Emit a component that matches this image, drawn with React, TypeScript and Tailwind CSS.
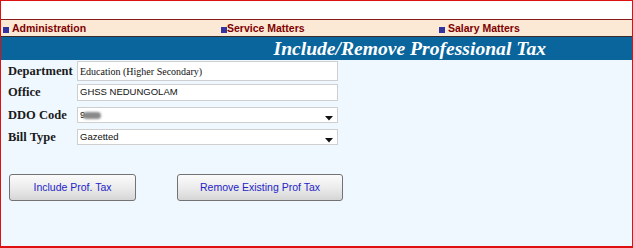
import React from 'react';

const navItems = [
    { label: 'Administration', gap: 'ml-[3px]' },
    { label: 'Service Matters', gap: 'ml-0' },
    { label: 'Salary Matters', gap: 'ml-[3px]' },
];

function NavBar() {
    return (
        <div className="flex h-[17px] items-center overflow-hidden border-b border-[#3b2b2b] bg-[#fbe9d6] pl-[2px]">
            {navItems.map((item) => (
                <div key={item.label} className="flex w-[218px] shrink-0 items-center">
                    <span className="mt-[3px] inline-block h-[6px] w-[6px] bg-[#3333a0]" />
                    <span
                        className={`${item.gap} text-[10.5px] font-bold leading-none text-[#800000]`}
                        style={{ fontFamily: '"Liberation Sans", Arial, sans-serif' }}
                    >
                        {item.label}
                    </span>
                </div>
            ))}
        </div>
    );
}

function Field({ label, h, mt, children }: { label: string; h: string; mt: string; children: React.ReactNode }) {
    return (
        <div className={`flex items-center ${mt}`}>
            <div
                className="w-[69px] text-[12.5px] font-bold leading-none text-[#1a1a1a]"
                style={{ fontFamily: '"Liberation Serif", "Times New Roman", serif' }}
            >
                {label}
            </div>
            <div
                className={`relative flex w-[261px] items-center border border-[#cfcfcf] bg-white pl-[2px] ${h}`}
            >
                {children}
            </div>
        </div>
    );
}

function Arrow() {
    return (
        <svg className="absolute right-[4px] top-[8px]" width="8" height="5" viewBox="0 0 8 5">
            <path d="M0 0 H8 L4 4.5 Z" fill="#111" />
        </svg>
    );
}

function ActionButton({ label, width }: { label: string; width: string }) {
    return (
        <button
            className={`h-[27px] ${width} rounded-[3px] border border-[#737373] bg-gradient-to-b from-[#fbfbfb] via-[#ececec] to-[#d6d6d6] text-[10.5px] text-[#2424c8]`}
            style={{ fontFamily: '"Liberation Sans", Tahoma, sans-serif' }}
        >
            {label}
        </button>
    );
}

export default function App() {
    const sans = { fontFamily: '"Liberation Sans", Arial, sans-serif' };
    return (
        <div className="flex h-[248px] w-[633px] flex-col border border-b-2 border-[#e01010] bg-[#f0f8ff]">
            <div className="h-[19px] border-b border-[#8b1a1a] bg-white" />
            <NavBar />
            <div className="flex h-[23px] items-center justify-end bg-[#09659c] pr-[86px]">
                <span
                    className="text-[19.6px] font-bold italic leading-none text-white"
                    style={{ fontFamily: '"Liberation Serif", Georgia, serif' }}
                >
                    Include/Remove Professional Tax
                </span>
            </div>
            <div className="flex flex-col pl-[7px] pt-[1px]">
                <Field label="Department" h="h-[20px]" mt="mt-0">
                    <span
                        className="text-[10px] text-[#111]"
                        style={{ fontFamily: '"Liberation Serif", "Times New Roman", serif' }}
                    >
                        Education (Higher Secondary)
                    </span>
                </Field>
                <Field label="Office" h="h-[17px]" mt="mt-[3px]">
                    <span className="text-[9.5px] text-[#111]" style={sans}>
                        GHSS NEDUNGOLAM
                    </span>
                </Field>
                <Field label="DDO Code" h="h-[16px]" mt="mt-[6px]">
                    <span className="flex items-center text-[9.5px] text-[#111]" style={sans}>
                        9
                        <span className="ml-[-2px] inline-block h-[7px] w-[18px] rounded-full bg-[#8a8a8a] blur-[1px]" />
                    </span>
                    <Arrow />
                </Field>
                <Field label="Bill Type" h="h-[16px]" mt="mt-[6px]">
                    <span className="text-[9.5px] text-[#111]" style={sans}>
                        Gazetted
                    </span>
                    <Arrow />
                </Field>
                <div className="mt-[29px] flex gap-[41px] pl-[1px]">
                    <ActionButton label="Include Prof. Tax" width="w-[127px]" />
                    <ActionButton label="Remove Existing Prof Tax" width="w-[166px]" />
                </div>
            </div>
        </div>
    );
}
